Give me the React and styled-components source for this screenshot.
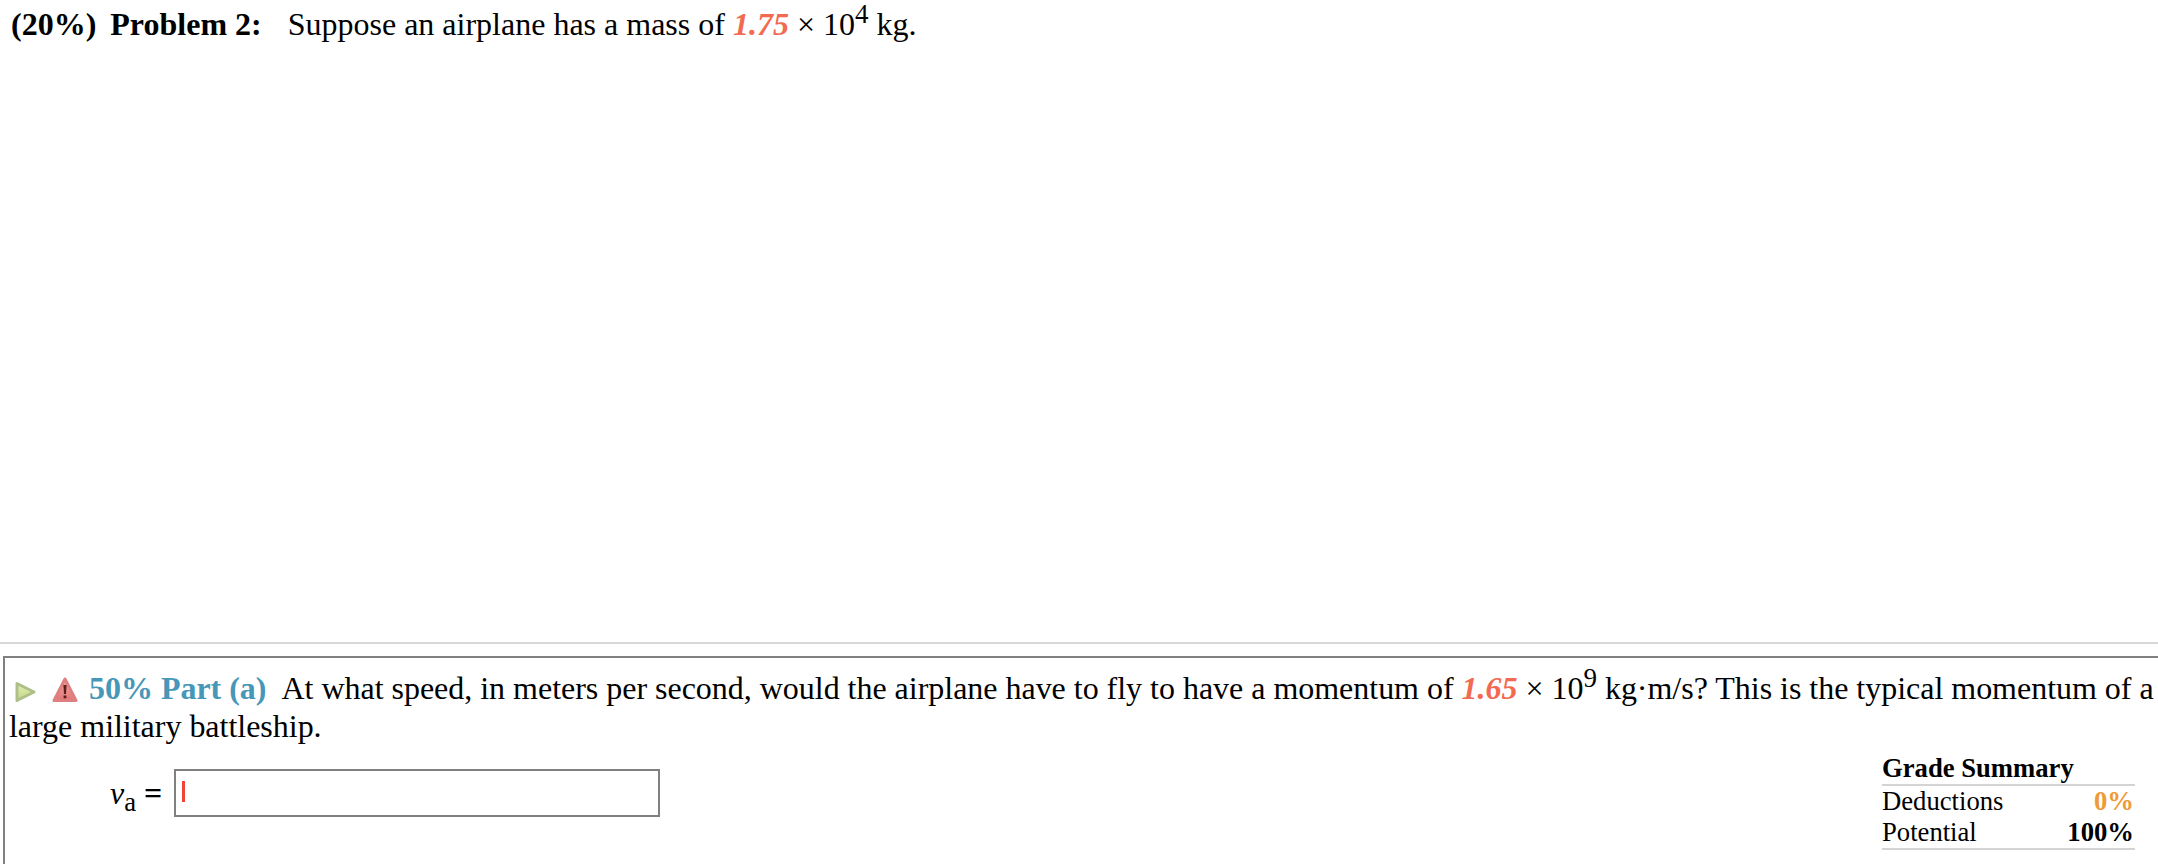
import React from "react";
import styled, { createGlobalStyle } from "styled-components";

const GlobalStyle = createGlobalStyle`
  html, body {
    margin: 0;
    padding: 0;
    background: #fff;
    overflow: hidden;
  }
  body {
    font-family: "Liberation Serif", "Times New Roman", serif;
    font-size: 32px;
    color: #000;
  }
`;

function PlayIcon() {
  return (
    <IconSvg $left={4} $right={15} width="24" height="24" viewBox="0 0 24 24">
      <defs>
        <linearGradient id="playFill" x1="0" y1="0" x2="0" y2="1">
          <stop offset="0" stopColor="#e2eeb4" />
          <stop offset="1" stopColor="#c3d984" />
        </linearGradient>
      </defs>
      <path
        d="M4 3.5 L21 12 L4 20.5 Z"
        fill="url(#playFill)"
        stroke="#aebf8a"
        strokeWidth="3"
        strokeLinejoin="round"
      />
    </IconSvg>
  );
}

function WarningIcon() {
  return (
    <IconSvg $right={11} width="26" height="28" viewBox="0 0 26 28">
      <defs>
        <linearGradient id="warnFill" x1="0" y1="0" x2="0" y2="1">
          <stop offset="0" stopColor="#f4a8a4" />
          <stop offset="1" stopColor="#e07676" />
        </linearGradient>
      </defs>
      <path
        d="M13 3 L24 24.5 L2 24.5 Z"
        fill="url(#warnFill)"
        stroke="#de8080"
        strokeWidth="3"
        strokeLinejoin="round"
      />
      <path d="M11.4 9 H14.6 L14 18 H12 Z" fill="#5e1d1d" />
      <rect x="11.6" y="19.5" width="2.8" height="2.8" fill="#5e1d1d" />
    </IconSvg>
  );
}

export default function App() {
  return (
    <Page>
      <GlobalStyle />
      <ProblemHead>
        <strong>(20%)</strong>
        <ProblemLabel>Problem 2:</ProblemLabel>
        <span>
          Suppose an airplane has a mass of <Given>1.75</Given> × 10<Sup>4</Sup> kg.
        </span>
      </ProblemHead>
      <Divider />
      <PartBox>
        <Question>
          <PlayIcon />
          <WarningIcon />
          <PartTitle>50% Part (a)</PartTitle>
          At what speed, in meters per second, would the airplane have to fly to have a
          momentum of <Given>1.65</Given> × 10<Sup>9</Sup> kg·m/s? This is the typical
          momentum of a large military battleship.
        </Question>
        <AnswerRow>
          <Answer>
            <Symbol>
              <em>v</em>
              <sub>a</sub> <Equals>=</Equals>
            </Symbol>
            <AnswerInput>
              <Caret />
            </AnswerInput>
          </Answer>
          <Summary>
            <SummaryTitle>Grade Summary</SummaryTitle>
            <SummaryRow>
              <span>Deductions</span>
              <Deduction>0%</Deduction>
            </SummaryRow>
            <SummaryRow $last>
              <span>Potential</span>
              <strong>100%</strong>
            </SummaryRow>
          </Summary>
        </AnswerRow>
      </PartBox>
    </Page>
  );
}

const Page = styled.div`
  width: 2158px;
  height: 864px;
  overflow: hidden;
  display: flex;
  flex-direction: column;
`;

const ProblemHead = styled.div`
  display: flex;
  flex: none;
  height: 642px;
  padding: 4px 0 0 11px;
  box-sizing: border-box;
  line-height: 40px;
  white-space: pre;
`;

const ProblemLabel = styled.strong`
  margin: 0 26px 0 14px;
`;

const Given = styled.em`
  font-weight: bold;
  color: #f26a50;
`;

const Sup = styled.sup`
  font-size: 27px;
  line-height: 0;
`;

const Divider = styled.div`
  flex: none;
  height: 2px;
  background: #d8d8d8;
`;

const PartBox = styled.div`
  flex: none;
  height: 300px;
  margin: 12px -20px 0 3px;
  padding: 11px 10px 0 4px;
  border: 2px solid #808080;
`;

const Question = styled.div`
  line-height: 38px;
  letter-spacing: -0.02px;
`;

const IconSvg = styled.svg`
  vertical-align: -5px;
  margin-left: ${(p) => p.$left || 0}px;
  margin-right: ${(p) => p.$right}px;
`;

const PartTitle = styled.strong`
  color: #4797b8;
  margin-right: 15px;
`;

const AnswerRow = styled.div`
  display: flex;
  justify-content: space-between;
  align-items: flex-start;
  margin-top: 8px;
`;

const Answer = styled.div`
  display: flex;
  align-items: center;
  margin: 16px 0 0 101px;
`;

const Symbol = styled.span`
  margin-right: 12px;
  sub {
    line-height: 0;
  }
`;

const Equals = styled.span`
  font-weight: bold;
`;

const AnswerInput = styled.div`
  width: 486px;
  height: 48px;
  border: 2px solid #808080;
  padding: 10px 0 0 6px;
  box-sizing: border-box;
`;

const Caret = styled.div`
  width: 3px;
  height: 21px;
  background: #f0443a;
`;

const Summary = styled.div`
  width: 253px;
  font-size: 26.67px;
  line-height: 31px;
  margin-right: 31px;
`;

const SummaryTitle = styled.div`
  font-weight: bold;
  border-bottom: 2px solid #d4d4d4;
`;

const SummaryRow = styled.div`
  display: flex;
  justify-content: space-between;
  padding-right: 1px;
  border-bottom: ${(p) => (p.$last ? "2px solid #d4d4d4" : "none")};
`;

const Deduction = styled.strong`
  color: #f09a36;
`;
